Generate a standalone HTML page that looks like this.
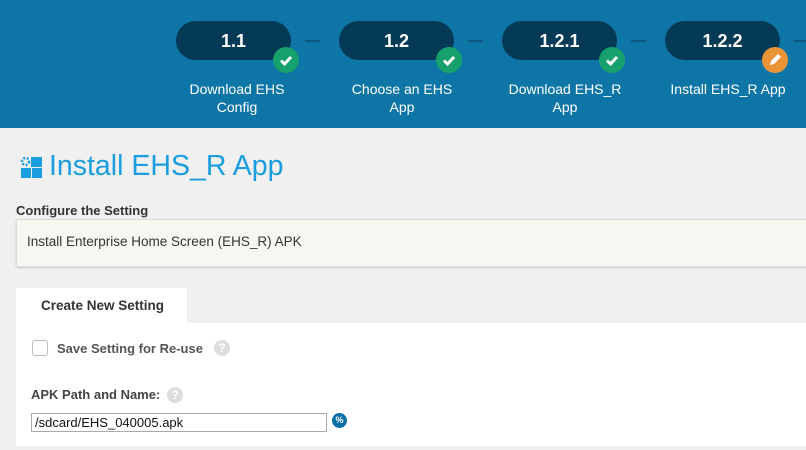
<!DOCTYPE html>
<html><head><style>
body{margin:0;width:806px;height:450px;overflow:hidden;background:#f0f0f0;font-family:"Liberation Sans",sans-serif;position:relative}
.hdr{position:absolute;left:0;top:0;width:806px;height:128px;background:#0e76a6}
.pill{position:absolute;top:21px;width:115px;height:39px;border-radius:20px;background:#053a56;color:#fff;font-weight:bold;font-size:18px;text-align:center;line-height:40px}
.line{position:absolute;top:40px;width:15px;height:2px;background:#0a5a80}
.lab{position:absolute;top:80px;width:140px;text-align:center;color:#fff;font-size:14px;line-height:18px}
.a{position:absolute}
</style></head><body>
<div class="hdr">
<div class="pill" style="left:176px">1.1</div>
<div class="pill" style="left:339px">1.2</div>
<div class="pill" style="left:502px">1.2.1</div>
<div class="pill" style="left:665px">1.2.2</div>
<div class="line" style="left:305px"></div>
<div class="line" style="left:468px"></div>
<div class="line" style="left:631px"></div>
<div class="line" style="left:794px"></div>
<svg class="a" style="left:273px;top:47px" width="26" height="26"><circle cx="13" cy="13" r="13" fill="#16a06c"/><path d="M8 13.5l3.5 3.5 6.5-7" stroke="#fff" stroke-width="3" fill="none"/></svg>
<svg class="a" style="left:436px;top:47px" width="26" height="26"><circle cx="13" cy="13" r="13" fill="#16a06c"/><path d="M8 13.5l3.5 3.5 6.5-7" stroke="#fff" stroke-width="3" fill="none"/></svg>
<svg class="a" style="left:599px;top:47px" width="26" height="26"><circle cx="13" cy="13" r="13" fill="#16a06c"/><path d="M8 13.5l3.5 3.5 6.5-7" stroke="#fff" stroke-width="3" fill="none"/></svg>
<svg class="a" style="left:762px;top:47px" width="26" height="26"><circle cx="13" cy="13" r="13" fill="#e99436"/><path d="M8 18l1-4 7-7 3 3-7 7z" fill="#fff"/></svg>
<div class="lab" style="left:167px">Download EHS<br>Config</div>
<div class="lab" style="left:332px">Choose an EHS<br>App</div>
<div class="lab" style="left:495px">Download EHS_R<br>App</div>
<div class="lab" style="left:658px">Install EHS_R App</div>
</div>
<svg class="a" style="left:20px;top:156px" width="24" height="24"><rect x="11" y="1" width="11" height="10" fill="#1a9ee0"/><rect x="1" y="12" width="10" height="10" fill="#1a9ee0"/><rect x="12" y="12" width="10" height="10" fill="#1a9ee0"/><circle cx="5.5" cy="5.5" r="3.5" fill="none" stroke="#1a9ee0" stroke-width="2.5" stroke-dasharray="2 1.5"/></svg>
<div class="a" style="left:49px;top:150px;font-size:28.5px;color:#1a9ee0">Install EHS_R App</div>
<div class="a" style="left:16px;top:203px;font-size:13px;font-weight:bold;color:#333">Configure the Setting</div>
<div class="a" style="left:16px;top:219px;width:800px;height:46px;background:#f7f7f2;border:1px solid #ddd;box-shadow:0 1px 2px #ccc"></div>
<div class="a" style="left:27px;top:234px;font-size:13.5px;color:#333">Install Enterprise Home Screen (EHS_R) APK</div>
<div class="a" style="left:16px;top:288px;width:171px;height:36px;background:#fff"></div>
<div class="a" style="left:41px;top:298px;font-size:13.5px;font-weight:bold;color:#333">Create New Setting</div>
<div class="a" style="left:16px;top:323px;width:790px;height:123px;background:#fff"></div>
<div class="a" style="left:32px;top:340px;width:14px;height:14px;border:1px solid #bbb;border-radius:3px"></div>
<div class="a" style="left:57px;top:341px;font-size:13px;font-weight:bold;color:#555">Save Setting for Re-use</div>
<div class="a" style="left:214px;top:340px;width:16px;height:16px;border-radius:50%;background:#ddd;color:#fff;font-size:12px;font-weight:bold;text-align:center;line-height:16px">?</div>
<div class="a" style="left:31px;top:387px;font-size:13px;font-weight:bold;color:#444">APK Path and Name:</div>
<div class="a" style="left:167px;top:387px;width:16px;height:16px;border-radius:50%;background:#ddd;color:#fff;font-size:12px;font-weight:bold;text-align:center;line-height:16px">?</div>
<div class="a" style="left:31px;top:413px;width:291px;height:17px;border:1px solid #aaa;background:#fff;font-size:13px;line-height:17px;padding-left:3px;color:#111">/sdcard/EHS_040005.apk</div>
<div class="a" style="left:332px;top:413px;width:15px;height:15px;border-radius:50%;background:#0d6fa8;color:#fff;font-size:9px;font-weight:bold;text-align:center;line-height:15px">%</div>
</body></html>
